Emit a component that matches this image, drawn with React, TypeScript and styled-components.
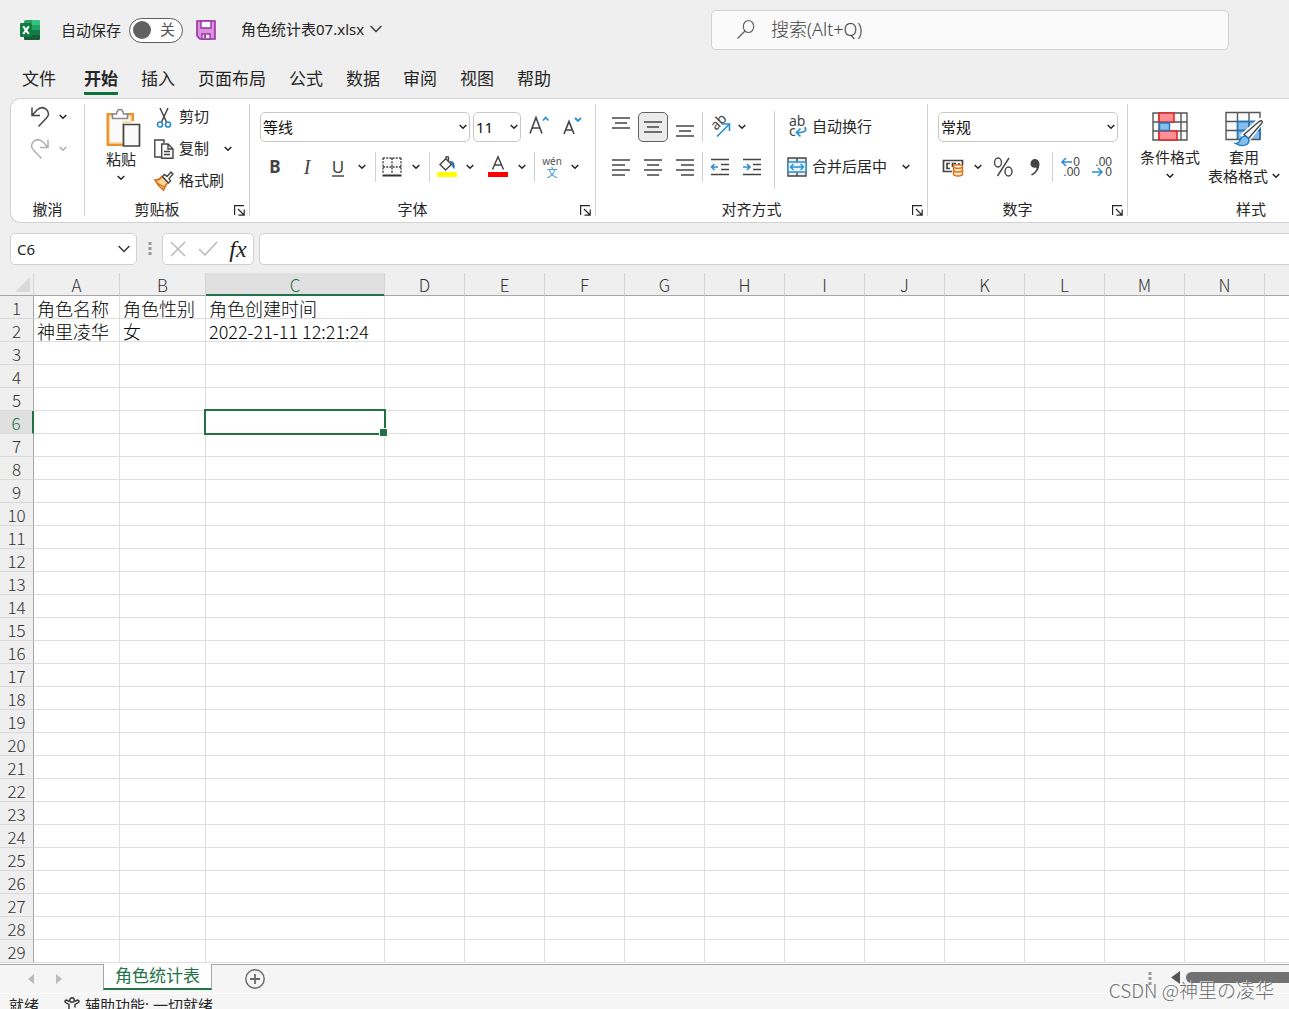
import React, { useState } from "react";
import styled, { createGlobalStyle, css } from "styled-components";

const ui = '"Noto Sans", "Noto Sans CJK SC", sans-serif';
const sheet = '"Noto Sans CJK SC", sans-serif';
const green = "#217346";
const blue = "#2b8fd0";
const ink = "#444444";

const Global = createGlobalStyle`
  * { box-sizing: border-box; }
  body { margin: 0; background: #efefef; color: #262626; font: 15px/22px ${ui}; }
  button, input, select { font: inherit; color: inherit; }
  button { border: 0; padding: 0; margin: 0; background: none; }
  svg { display: block; flex: none; overflow: visible; }
`;

const Shell = styled.div`
  position: relative;
  display: flex;
  flex-direction: column;
  height: 100vh;
  overflow: hidden;
`;

/* ---------- title bar ---------- */
const TitleBar = styled.header`
  display: flex;
  align-items: center;
  height: 60px;
  padding: 0 60px 0 20px;
`;
const AutoSave = styled.label`
  display: flex;
  align-items: center;
  gap: 8px;
  margin: 0 13px 0 21px;
`;
const Toggle = styled.span`
  position: relative;
  display: flex;
  align-items: center;
  justify-content: space-between;
  width: 54px;
  height: 25px;
  padding: 0 7px 2px 3px;
  border: 1px solid #5c5c5c;
  border-radius: 13px;
  background: #fff;
  color: #555;
  line-height: 20px;
  input { position: absolute; inset: 0; margin: 0; opacity: 0; width: 100%; height: 100%; }
`;
const Knob = styled.span`
  width: 18px;
  height: 18px;
  margin-top: 2px;
  border-radius: 50%;
  background: #616161;
`;
const FileName = styled.button`
  display: flex;
  align-items: center;
  gap: 6px;
  margin-left: 25px;
  padding-bottom: 2px;
`;
const Search = styled.label`
  display: flex;
  align-items: center;
  gap: 16px;
  width: 518px;
  height: 40px;
  margin-left: auto;
  padding: 0 0 2px 25px;
  border: 1px solid #d1d1d1;
  border-radius: 5px;
  background: #fafafa;
  input {
    flex: 1;
    min-width: 0;
    padding: 0;
    border: 0;
    outline: 0;
    background: none;
    font-size: 18px;
    font-weight: 300;
    &::placeholder { color: #444; opacity: 1; }
  }
`;

/* ---------- tabs ---------- */
const Tabs = styled.nav`
  display: flex;
  gap: 23px;
  height: 38px;
  padding: 6px 22px 0;
`;
const Tab = styled.button<{ $on?: boolean }>`
  display: block;
  height: 29px;
  font-size: 17px;
  line-height: 26px;
  border-bottom: 3px solid ${(p) => (p.$on ? "#0f703b" : "transparent")};
  border-radius: 1px;
  font-weight: ${(p) => (p.$on ? 700 : 400)};
  &:first-child { margin-right: 5px; }
`;

/* ---------- ribbon ---------- */
const Ribbon = styled.section`
  display: flex;
  flex: none;
  height: 125px;
  margin-left: 10px;
  padding: 5px 0 6px;
  border: 1px solid #d1d1d1;
  border-right: 0;
  border-radius: 10px 0 0 10px;
  background: #fff;
  overflow: hidden;
`;
const Group = styled.div<{ $w: number }>`
  display: flex;
  flex: none;
  flex-direction: column;
  justify-content: space-between;
  width: ${(p) => p.$w}px;
  border-right: 1px solid #d1d1d1;
  &:last-child { border-right: 0; }
`;
const GroupBody = styled.div<{ $left: number }>`
  display: flex;
  padding-left: ${(p) => p.$left}px;
`;
const GroupFoot = styled.div`
  display: flex;
  align-items: center;
  height: 14px;
  line-height: 14px;
  span { flex: 1; text-align: center; }
`;
const Launcher = styled.button`
  width: 20px;
  padding: 3px 0 0 5px;
`;
const Stack = styled.div<{ $left?: number; $top?: number; $gap?: number }>`
  display: flex;
  flex-direction: column;
  gap: ${(p) => p.$gap ?? 6}px;
  padding-left: ${(p) => p.$left ?? 0}px;
  padding-top: ${(p) => p.$top ?? 0}px;
`;
const Row = styled.div<{ $h?: number; $gap?: number }>`
  display: flex;
  align-items: center;
  height: ${(p) => p.$h ?? 30}px;
  gap: ${(p) => p.$gap ?? 0}px;
`;
const Tool = styled.button<{ $w?: number; $on?: boolean }>`
  display: flex;
  flex: none;
  align-items: center;
  justify-content: center;
  width: ${(p) => p.$w ?? 30}px;
  height: 30px;
  color: ${ink};
  border-radius: 5px;
  ${(p) => p.$on && css`border: 1px solid #616161; background: #ebebeb;`}
`;
const Drop = styled(Tool)<{ $off?: boolean; $left?: number }>`
  margin-left: ${(p) => p.$left ?? 0}px;
  color: ${(p) => (p.$off ? "#b0b0b0" : "#262626")};
`;
const TextTool = styled.button`
  display: flex;
  align-items: center;
  gap: 5px;
  height: 26px;
  white-space: nowrap;
  span { padding-bottom: 2px; }
`;
const Sep = styled.span`
  flex: none;
  width: 1px;
  height: 30px;
  margin: 0 2px 0 3px;
  background: #d1d1d1;
`;
const NarrowSep = styled(Sep)`
  margin: 0;
`;
const TallSep = styled.span`
  width: 1px;
  height: 78px;
  margin: 7px 0 0 7px;
  background: #d1d1d1;
`;
const BigTool = styled.button<{ $w: number; $top: number }>`
  display: flex;
  flex: none;
  flex-direction: column;
  align-items: center;
  width: ${(p) => p.$w}px;
  padding-top: ${(p) => p.$top}px;
  white-space: nowrap;
`;
const BigLine = styled.span<{ $h: number }>`
  display: flex;
  align-items: center;
  justify-content: center;
  gap: 4px;
  height: ${(p) => p.$h}px;
`;
const SelectBox = styled.span<{ $w: number }>`
  position: relative;
  width: ${(p) => p.$w}px;
  height: 30px;
  select {
    width: 100%;
    height: 100%;
    padding: 0 16px 0 2px;
    appearance: none;
    border: 1px solid #c8c8c8;
    border-radius: 5px;
    background: #fff;
    color: #111;
  }
  svg { position: absolute; right: 3px; top: 12px; pointer-events: none; }
`;
const Letter = styled.span<{ $kind: "b" | "i" | "u" }>`
  font-size: 17px;
  line-height: 20px;
  ${(p) => p.$kind === "b" && css`font-weight: 700;`}
  ${(p) => p.$kind === "i" && css`font-family: "Liberation Serif", serif; font-style: italic; font-size: 20px;`}
  ${(p) => p.$kind === "u" && css`line-height: 17px; border-bottom: 2px solid #777;`}
`;
const Pinyin = styled.span`
  display: flex;
  flex-direction: column;
  align-items: center;
  font-size: 10px;
  line-height: 11px;
  color: #555;
  b { font-weight: 400; font-size: 11px; color: ${blue}; }
`;

/* ---------- formula bar ---------- */
const FormulaBar = styled.section`
  display: flex;
  flex: none;
  height: 50px;
  padding: 10px 0 8px 10px;
`;
const box = css`
  display: flex;
  align-items: center;
  height: 32px;
  border: 1px solid #d1d1d1;
  border-radius: 5px;
  background: #fff;
`;
const NameBox = styled.div`
  ${box}
  width: 127px;
  padding: 0 6px;
  input { flex: 1; min-width: 0; padding: 0; border: 0; outline: 0; background: none; }
`;
const Grip = styled.span<{ $w: number }>`
  display: flex;
  align-items: center;
  justify-content: center;
  width: ${(p) => p.$w}px;
`;
const FxBox = styled.div`
  ${box}
  width: 92px;
  margin-right: 5px;
`;
const Fx = styled.span`
  font: italic 400 24px/24px "Liberation Serif", serif;
  color: #222;
`;
const FormulaInput = styled.input`
  ${box}
  flex: 1;
  border-right: 0;
  border-radius: 5px 0 0 5px;
  outline: 0;
  padding: 0 6px;
`;

/* ---------- grid ---------- */
const GridArea = styled.main`
  flex: 1;
  min-height: 0;
  overflow: hidden;
  background: #fff;
`;
const Table = styled.table`
  width: 100%;
  table-layout: fixed;
  border-collapse: separate;
  border-spacing: 0;
  font-family: ${sheet};
  font-weight: 300;
  line-height: 20px;
`;
const ColHead = styled.th<{ $on?: boolean }>`
  height: 23px;
  padding: 2px 0 0;
  font-size: 17px;
  font-weight: 300;
  color: ${(p) => (p.$on ? green : "#333")};
  background: ${(p) => (p.$on ? "#e0e0e0" : "#efefef")};
  border-right: 1px solid #d4d4d4;
  border-bottom: 1px solid ${(p) => (p.$on ? green : "#a6a6a6")};
  box-shadow: ${(p) => (p.$on ? `inset 0 -1px ${green}` : "none")};
  &:last-child { border-right: 0; }
`;
const Corner = styled.td`
  padding: 0 0 0 15px;
  background: #efefef;
  border-right: 1px solid #d4d4d4;
  border-bottom: 1px solid #a6a6a6;
`;
const RowHead = styled.th<{ $on?: boolean }>`
  height: 23px;
  padding: 2px 0 0;
  font-size: 17px;
  font-weight: 300;
  color: ${(p) => (p.$on ? green : "#333")};
  background: ${(p) => (p.$on ? "#e0e0e0" : "#efefef")};
  border-right: ${(p) => (p.$on ? `2px solid ${green}` : "1px solid #a6a6a6")};
  border-bottom: 1px solid #d9d9d9;
`;
const Cell = styled.td`
  position: relative;
  height: 23px;
  padding: 2px 0 0 3px;
  font-size: 18px;
  color: #000;
  white-space: nowrap;
  border-right: 1px solid #dedede;
  border-bottom: 1px solid #dedede;
  &:last-child { border-right: 0; }
`;
const Selection = styled.span`
  position: absolute;
  z-index: 1;
  inset: -2px;
  border: 2px solid ${green};
  &::after {
    content: "";
    position: absolute;
    right: -4px;
    bottom: -4px;
    width: 7px;
    height: 7px;
    border: 1px solid #fff;
    background: ${green};
  }
`;

/* ---------- bottom ---------- */
const SheetBar = styled.footer`
  display: flex;
  flex: none;
  height: 30px;
  border-top: 1px solid #a6a6a6;
  border-bottom: 1px solid #fff;
  background: #f5f5f5;
`;
const SheetNav = styled.div`
  display: flex;
  align-items: center;
  gap: 22px;
  width: 103px;
  padding-left: 28px;
`;
const SheetTab = styled.button`
  height: 26px;
  width: 109px;
  margin-top: -1px;
  padding-bottom: 3px;
  border: 1px solid #a6a6a6;
  border-top: 0;
  border-bottom: 2px solid ${green};
  background: #fff;
  color: ${green};
  font: 17px/20px ${sheet};
`;
const AddSheet = styled.button`
  margin-left: 33px;
`;
const ScrollZone = styled.div`
  display: flex;
  align-items: center;
  width: 153px;
  margin-left: auto;
  padding-left: 11px;
`;
const ScrollArrow = styled.button`
  margin: 0 6px 4px 18px;
`;
const Thumb = styled.span`
  flex: 1;
  height: 11px;
  margin-bottom: 4px;
  border-radius: 6px 0 0 6px;
  background: #717171;
`;
const Status = styled.div`
  display: flex;
  flex: none;
  gap: 25px;
  height: 15px;
  padding-left: 9px;
  overflow: hidden;
  background: #f5f5f5;
  line-height: 22px;
  span { display: flex; gap: 5px; }
  svg { margin-top: 3px; }
`;
const Watermark = styled.span`
  position: absolute;
  right: 15px;
  bottom: 7px;
  font: 300 19px/24px ${sheet};
  color: #707070;
  text-shadow: -1px -1px 0 rgba(255, 255, 255, 0.7);
`;

/* ---------- drawings ---------- */
const S = ({ w, h, children, c = ink }: { w: number; h: number; children: React.ReactNode; c?: string }) => (
  <svg width={w} height={h} viewBox={`0 0 ${w} ${h}`} fill="none" stroke={c} strokeWidth="1.4" aria-hidden="true">
    {children}
  </svg>
);
const Glyph = styled.text<{ $size: number }>`
  font-family: ${ui};
  font-size: ${(p) => p.$size}px;
  font-weight: 400;
  fill: ${ink};
  stroke: none;
`;
const Chev = () => <S w={8} h={6} c="currentColor"><path d="M.7 1 4 4.3 7.3 1" strokeWidth="1.5" /></S>;
const BigChev = () => <S w={12} h={8} c="#333"><path d="M.6 1 6 6.5 11.4 1" /></S>;

const ExcelIcon = () => (
  <svg width="20" height="20" viewBox="0 0 20 20" aria-hidden="true">
    <path d="M6 0h7v5H4V2q0-2 2-2z" fill="#21a366" /><path d="M12 0h7q1 0 1 1v4h-8z" fill="#33c481" />
    <path d="M4 5h8v5H4z" fill="#107c41" /><path d="M12 5h8v5h-8z" fill="#21a366" />
    <path d="M4 10h8v5H4z" fill="#185c37" /><path d="M12 10h8v5h-8z" fill="#107c41" />
    <path d="M4 15h16v4q0 1-1 1H5q-1 0-1-1z" fill="#185c37" />
    <rect y="3" width="12" height="14" rx="1.2" fill="#107c41" />
    <path d="m3.2 6.3 5.6 7.6M8.8 6.3l-5.6 7.6" stroke="#fff" strokeWidth="2" />
  </svg>
);
const SaveIcon = () => (
  <S w={20} h={20} c="#9b2fa5">
    <path d="M1 1h18v18H4l-3-3z" fill="#d993dc" strokeWidth="1.6" />
    <path d="M5 1h10v7H5zM6 19v-5h8v5z" fill="#fafafa" /><path d="M9 15v3" strokeWidth="2" />
  </S>
);
const SearchIcon = () => <S w={18} h={20} c="#666"><ellipse cx="11.5" cy="7.5" rx="5.2" ry="6" strokeWidth="1.2" /><path d="m8 12-7.5 7.5" /></S>;
const Undo = () => <S w={20} h={22}><path d="M2 1.5v8h8M2 9.5 7 4q5-4.500 9.500-.5 4 4.500 0 8.500L8.500 20.500" strokeWidth="1.5" /></S>;
const Redo = () => <S w={20} h={22} c="#b0b0b0"><path d="M18 1.500v8h-8M18 9.500 13 4Q8 -.5 3.500 3.500q-4 4.500 0 8.500l8 8.500" strokeWidth="1.500" /></S>;
const PasteIcon = () => (
  <S w={38} h={40}>
    <g transform="translate(4 0)">
      <path d="M8 6.500H2v30h15M20 6.500h6.500V13" stroke="#e8912d" strokeWidth="3" />
      <path d="M3.500 8h21.500v6h-8v21H3.500z" fill="#fafafa" stroke="#f9d79b" />
      <path d="M6.500 10.500V6h4q.5-4.500 3.500-4.500T17.500 6h4v4.500z" fill="#fafafa" stroke="#8a8a8a" strokeWidth="1.600" />
      <path d="M17.500 16.500h16V38h-16z" fill="#fafafa" strokeWidth="1.700" />
    </g>
  </S>
);
const CutIcon = () => (
  <S w={20} h={22}>
    <path d="m6 2 6.500 14M14 2 7.500 16" strokeWidth="1.500" />
    <circle cx="6" cy="18.500" r="2.500" stroke={blue} strokeWidth="1.700" /><circle cx="14" cy="18.500" r="2.500" stroke={blue} strokeWidth="1.700" />
  </S>
);
const CopyIcon = () => (
  <S w={20} h={20}>
    <path d="M7 18H.8V1H10v3" /><path d="M7.700 5H14l5 5v9.300H7.700zM14 5v5h5M10 12.500h6M10 15.500h6" fill="#fafafa" />
  </S>
);
const BrushIcon = () => (
  <S w={20} h={20}>
    <path d="M1 9q4 .5 7-3.500l6 6Q10.500 15 9.500 19L5 15z" fill="#f9d79b" stroke="#dd6e10" strokeWidth="1.600" />
    <path d="m3 12 7 4" stroke="#dd6e10" />
    <path d="m8.500 5.500 2-2 2.500 2 4-4.500 2 2-4 4.500 1.500 2.500-2 2z" fill="#fff" />
  </S>
);
const LaunchIcon = () => <S w={11} h={11}><path d="M.6 10V.6H10M4 4l5.500 5.500M10.200 4.500v5.700H4.500" stroke="#262626" strokeWidth="1.200" /></S>;
const GrowA = ({ down }: { down?: boolean }) => (
  <S w={22} h={22}>
    {down
      ? <path d="m3 18 5-12.500 5 12.500M4.700 14h6.600" strokeWidth="1.600" />
      : <path d="M2 17.500 8 1.500l6 16M4.200 12h7.600" strokeWidth="1.600" />}
    <path d={down ? "m14 2 3 3 3-3" : "m15 4.500 2.700-3 2.700 3"} stroke={blue} strokeWidth="1.800" />
  </S>
);
const BorderIcon = () => (
  <S w={20} h={20}><path d="M1 1h18v17H1z" fill="#fafafa" stroke="none" /><path d="M1 1h18M1 10h18M1 1v16M10 1v16M19 1v16" strokeDasharray="2 1.200" /><path d="M.5 18.500h19" stroke="#333" strokeWidth="2" /></S>
);
const FillIcon = () => (
  <S w={20} h={22}>
    <path d="m8.500 2.500 6 6L8.500 14 3 8.500 9 2.500V1q2.500-1 2.500 1v3.500" fill="#fafafa" />
    <path d="M12.500 5q6-1 5 8-2.500-1-2.500-5z" fill="#1a72b8" stroke="none" />
    <path d="M0 16h20v5H0z" fill="#ffff00" stroke="none" />
  </S>
);
const FontColor = () => <S w={20} h={22}><path d="M4.500 13.500 10 .8l5.500 12.700M6.500 9h7" strokeWidth="1.500" /><path d="M0 16h20v5H0z" fill="#f00" stroke="none" /></S>;

const Lines = ({ l }: { l: [number, number][] }) => (
  <S w={20} h={5 * (l.length - 1) + 2}>
    {l.map(([a, b], i) => <path key={i} d={`M${a} ${i * 5 + 1}H${b}`} strokeWidth="1.500" />)}
  </S>
);
const VAlign = styled.span<{ $at: string }>`
  display: flex;
  flex-direction: column;
  justify-content: ${(p) => p.$at};
  height: 20px;
`;
const Orient = () => (
  <S w={22} h={22}>
    <Glyph $size={14} transform="translate(7 15) rotate(-45)">ab</Glyph>
    <path d="M8 20.500 20 8.500M13.500 8H20.500V15" stroke={blue} strokeWidth="1.600" />
  </S>
);
const Indent = ({ right }: { right?: boolean }) => (
  <S w={20} h={18}>
    <path d="M1 1.500h18M11 6.500h8M11 11.500h8M1 16.500h18" strokeWidth="1.500" />
    <path d={right ? "M1 9h7M5 6l3 3-3 3" : "M8 9H1.500M4.500 6l-3 3 3 3"} stroke={blue} strokeWidth="1.600" />
  </S>
);
const WrapIcon = () => (
  <S w={20} h={22}>
    <Glyph $size={14} x="2" y="10">ab</Glyph>
    <Glyph $size={14} x="2" y="20">c</Glyph>
    <path d="M18 11q3 6-8 5.500M13.500 12.500l-4 4 4 4" stroke={blue} strokeWidth="1.700" />
  </S>
);
const MergeIcon = () => (
  <S w={20} h={20}>
    <path d="M1 1h18v18H1zM10 1v18" fill="#eee" /><path d="M1 5h18v10H1z" fill="#eaf4fc" stroke={blue} />
    <path d="M3.500 10h13M6.500 7l-3 3 3 3M13.500 7l3 3-3 3" stroke={blue} />
  </S>
);
const MoneyIcon = () => (
  <S w={22} h={20}>
    <path d="M10 14.500H1.500v-11h19V8M8 6.500H5v5h3M14 6.500h-3.500V10M17 6v2" strokeWidth="1.700" />
    <path d="M11.500 9.500v7.500q0 2 4.500 2t4.500-2V9.500z" fill="#fde3c4" stroke="#dd6e10" /><ellipse cx="16" cy="9.500" rx="4.500" ry="1.800" fill="#fff" stroke="#dd6e10" />
    <path d="M11.500 13q0 2 4.500 2t4.500-2" stroke="#dd6e10" />
  </S>
);
const PercentIcon = () => <S w={20} h={20}><ellipse cx="5" cy="5.500" rx="3.500" ry="4.500" /><ellipse cx="15.500" cy="14.500" rx="3.500" ry="4.500" /><path d="M16 1 4.500 19" /></S>;
const CommaIcon = () => <S w={12} h={18}><path d="M2 16.500Q8 13 7.500 9.500 1.500 10.500 1.500 5.500 2 1 6 1q4.500.500 4.500 5.500Q10 14 3 17.500z" fill={ink} stroke="none" /></S>;
const Decimals = styled.span`
  position: relative;
  display: flex;
  flex-direction: column;
  align-items: flex-end;
  width: 20px;
  font: 12px/10px "Liberation Sans", sans-serif;
  svg { position: absolute; left: 0; }
`;
const ArrowSmall = ({ right }: { right?: boolean }) => (
  <S w={12} h={10} c={blue}><path d={right ? "M0 5h10M6 1l4 4-4 4" : "M12 5H2M6 1 2 5l4 4"} strokeWidth="1.600" /></S>
);
const CondIcon = () => (
  <S w={36} h={29}>
    <path d="M1 1h34v27H1zM1 10h34M1 19h34M7 1v27M29 1v27" fill="#fafafa" stroke="#555" />
    <path d="M7 1h15v9H7zM7 19h18v9H7z" fill="#ff8f94" stroke="#d92a2a" strokeWidth="1.600" /><path d="M7.500 11h10v7.500h-10z" fill="#83beec" stroke="#1f78c1" />
  </S>
);
const TableFmtIcon = () => (
  <S w={38} h={36}>
    <path d="M1 1.500h34v27H1z" fill="#fafafa" stroke="none" /><path d="M12.500 10.500H35v18H12.500z" fill="#83beec" stroke="none" />
    <path d="M1 1.500h34v27H1zM1 10.500h34M1 19.500h34M12.500 1.500v27M24 1.500v27" stroke="#555" /><path d="M12.500 28V10.500H35V28M24 10.500V28M12.500 19.500H35" stroke="#1f78c1" />
    <path d="M18 24 34 9.500q4-2 3 1.500L23 29z" fill="#fff" stroke="#fff" strokeWidth="4" />
    <path d="m19 23.500 15-13q4-2 3 1.500L23.500 27.500z" fill="#fafafa" /><path d="M10.500 32.500q4 0 5-4.500 3-4.500 7-1.500 3 3 0 6.500-5 3.500-12-.5z" fill="#83beec" stroke="#1f78c1" />
  </S>
);
const DotsIcon = () => <S w={4} h={14}><path d="M.5 0h3v3h-3zM.5 5h3v3h-3zM.5 10h3v3h-3z" fill="#999" stroke="none" /></S>;
const Tri = ({ right, c = "#bcbcbc", w = 6 }: { right?: boolean; c?: string; w?: number }) => (
  <svg width={w} height={w + 4} viewBox="0 0 6 10" preserveAspectRatio="none" aria-hidden="true"><path d={right ? "M0 0v10l6-5z" : "M6 0v10L0 5z"} fill={c} /></svg>
);
const AccessIcon = () => (
  <S w={16} h={18} c="#333"><circle cx="8" cy="3" r="2.200" /><path d="M5.500 4.500 2.500 3Q0 4 1.500 5.500L5 7.500v4L3.500 16M10.500 4.500l3-1.500Q16 4 14.500 5.500L11 7.500v3M10 14l4 3M14 13l-4 4" /></S>
);

const tabs = ["文件", "开始", "插入", "页面布局", "公式", "数据", "审阅", "视图", "帮助"];
const cols: [string, number][] = [
  ["A", 86], ["B", 86], ["C", 179],
  ...["D", "E", "F", "G", "H", "I", "J", "K", "L", "M", "N"].map((c): [string, number] => [c, 80]),
];
const data: Record<string, string> = {
  A1: "角色名称", B1: "角色性别", C1: "角色创建时间",
  A2: "神里凌华", B2: "女", C2: "2022-21-11 12:21:24",
};

const Pick = ({ w, label, value }: { w: number; label: string; value: string }) => (
  <SelectBox $w={w}>
    <select aria-label={label} defaultValue={value}><option>{value}</option></select>
    <Chev />
  </SelectBox>
);
const DropBtn = ({ w = 20, label, left, off }: { w?: number; label: string; left?: number; off?: boolean }) => (
  <Drop $w={w} $left={left} $off={off} aria-label={label}><Chev /></Drop>
);
const Foot = ({ label, launch = true }: { label: string; launch?: boolean }) => (
  <GroupFoot><span>{label}</span>{launch && <Launcher aria-label={`${label}设置`}><LaunchIcon /></Launcher>}</GroupFoot>
);

export default function App() {
  const [tab, setTab] = useState("开始");
  return (
    <Shell>
      <Global />
      <TitleBar>
        <ExcelIcon />
        <AutoSave>
          自动保存
          <Toggle><input type="checkbox" aria-label="自动保存" /><Knob />关</Toggle>
        </AutoSave>
        <button aria-label="保存"><SaveIcon /></button>
        <FileName>角色统计表07.xlsx<BigChev /></FileName>
        <Search><SearchIcon /><input aria-label="搜索" placeholder="搜索(Alt+Q)" /></Search>
      </TitleBar>

      <Tabs>
        {tabs.map((t) => <Tab key={t} $on={t === tab} onClick={() => setTab(t)}>{t}</Tab>)}
      </Tabs>

      <Ribbon>
        <Group $w={74}>
          <GroupBody $left={15}>
            <Stack>
              <Row $h={26}><Tool $w={28} aria-label="撤消"><Undo /></Tool><DropBtn w={18} label="撤消选项" /></Row>
              <Row $h={26}><Tool $w={28} aria-label="恢复"><Redo /></Tool><DropBtn w={18} label="恢复选项" off /></Row>
            </Stack>
          </GroupBody>
          <Foot label="撤消" launch={false} />
        </Group>

        <Group $w={165}>
          <GroupBody $left={17}>
            <BigTool $w={38} $top={4}>
              <PasteIcon /><BigLine $h={22}>粘贴</BigLine><BigLine $h={16}><Chev /></BigLine>
            </BigTool>
            <Stack $left={14}>
              <TextTool><CutIcon /><span>剪切</span></TextTool>
              <Row $h={26}><TextTool><CopyIcon /><span>复制</span></TextTool><DropBtn w={18} left={10} label="复制选项" /></Row>
              <TextTool><BrushIcon /><span>格式刷</span></TextTool>
            </Stack>
          </GroupBody>
          <Foot label="剪贴板" />
        </Group>

        <Group $w={346}>
          <GroupBody $left={10}>
            <Stack $top={8} $gap={10}>
              <Row $gap={3}>
                <Pick w={210} label="字体" value="等线" />
                <Pick w={48} label="字号" value="11" />
                <Tool aria-label="增大字号"><GrowA /></Tool>
                <Tool aria-label="减小字号"><GrowA down /></Tool>
              </Row>
              <Row>
                <Tool><Letter $kind="b">B</Letter></Tool>
                <Tool $w={34}><Letter $kind="i">I</Letter></Tool>
                <Tool $w={28}><Letter $kind="u">U</Letter></Tool><DropBtn label="下划线选项" />
                <Sep />
                <Tool $w={28} aria-label="边框"><BorderIcon /></Tool><DropBtn label="边框选项" />
                <Sep />
                <Tool $w={30} aria-label="填充颜色"><FillIcon /></Tool><DropBtn w={16} label="填充颜色选项" />
                <Tool $w={40} aria-label="字体颜色"><FontColor /></Tool><DropBtn w={8} label="字体颜色选项" />
                <Sep style={{ marginLeft: 8 }} />
                <Tool $w={30}><Pinyin>wén<b>文</b></Pinyin></Tool><DropBtn w={16} label="拼音选项" />
              </Row>
            </Stack>
          </GroupBody>
          <Foot label="字体" />
        </Group>

        <Group $w={332}>
          <GroupBody $left={10}>
            <Stack $top={8} $gap={10}>
              <Row $gap={2}>
                <Tool aria-label="顶端对齐"><VAlign $at="flex-start"><Lines l={[[1, 19], [4, 16], [1, 19]]} /></VAlign></Tool>
                <Tool $on aria-label="垂直居中"><VAlign $at="center"><Lines l={[[1, 19], [4, 16], [1, 19]]} /></VAlign></Tool>
                <Tool aria-label="底端对齐"><VAlign $at="flex-end"><Lines l={[[1, 19], [4, 16], [1, 19]]} /></VAlign></Tool>
                <NarrowSep />
                <Tool aria-label="方向"><Orient /></Tool><DropBtn w={10} label="方向选项" />
              </Row>
              <Row $gap={2}>
                <Tool aria-label="左对齐"><Lines l={[[1, 19], [1, 14], [1, 19], [1, 14]]} /></Tool>
                <Tool aria-label="居中"><Lines l={[[1, 19], [4, 16], [1, 19], [4, 16]]} /></Tool>
                <Tool aria-label="右对齐"><Lines l={[[1, 19], [6, 19], [1, 19], [6, 19]]} /></Tool>
                <NarrowSep />
                <Tool aria-label="减少缩进量"><Indent /></Tool>
                <Tool aria-label="增加缩进量"><Indent right /></Tool>
              </Row>
            </Stack>
            <TallSep />
            <Stack $left={12} $top={8} $gap={10}>
              <Row><TextTool><WrapIcon /><span>自动换行</span></TextTool></Row>
              <Row><TextTool><MergeIcon /><span>合并后居中</span></TextTool><DropBtn left={9} label="合并选项" /></Row>
            </Stack>
          </GroupBody>
          <Foot label="对齐方式" />
        </Group>

        <Group $w={200}>
          <GroupBody $left={10}>
            <Stack $top={8} $gap={10}>
              <Row><Pick w={180} label="数字格式" value="常规" /></Row>
              <Row $gap={2}>
                <Tool aria-label="会计数字格式"><MoneyIcon /></Tool><DropBtn w={16} label="会计数字格式选项" />
                <Tool aria-label="百分比样式"><PercentIcon /></Tool>
                <Tool aria-label="千位分隔样式"><CommaIcon /></Tool>
                <NarrowSep />
                <Tool aria-label="增加小数位数"><Decimals><ArrowSmall />0<span>.00</span></Decimals></Tool>
                <Tool aria-label="减少小数位数"><Decimals>.00<span><ArrowSmall right />0</span></Decimals></Tool>
              </Row>
            </Stack>
          </GroupBody>
          <Foot label="数字" />
        </Group>

        <Group $w={246}>
          <GroupBody $left={11}>
            <BigTool $w={62} $top={8}>
              <CondIcon /><BigLine $h={6} /><BigLine $h={20}>条件格式</BigLine><BigLine $h={18}><Chev /></BigLine>
            </BigTool>
            <Stack $left={6}>
              <BigTool $w={74} $top={7}>
                <TableFmtIcon /><BigLine $h={20}>套用</BigLine><BigLine $h={18}>表格格式<Chev /></BigLine>
              </BigTool>
            </Stack>
          </GroupBody>
          <Foot label="样式" launch={false} />
        </Group>
      </Ribbon>

      <FormulaBar>
        <NameBox><input aria-label="名称框" defaultValue="C6" /><BigChev /></NameBox>
        <Grip $w={25}><DotsIcon /></Grip>
        <FxBox>
          <Tool aria-label="取消"><S w={16} h={16} c="#b5b5b5"><path d="m1 1 14 14M15 1 1 15" /></S></Tool>
          <Tool aria-label="输入"><S w={20} h={16} c="#b5b5b5"><path d="m1 8 6 6L19 1" /></S></Tool>
          <Tool><Fx>fx</Fx></Tool>
        </FxBox>
        <FormulaInput aria-label="编辑栏" />
      </FormulaBar>

      <GridArea>
        <Table>
          <colgroup>
            <col style={{ width: 34 }} />
            {cols.map(([c, w]) => <col key={c} style={{ width: w }} />)}
            <col />
          </colgroup>
          <thead>
            <tr>
              <Corner><S w={16} h={15}><path d="M15 0v15H0z" fill="#dadada" stroke="none" /></S></Corner>
              {cols.map(([c]) => <ColHead key={c} scope="col" $on={c === "C"}>{c}</ColHead>)}
              <ColHead />
            </tr>
          </thead>
          <tbody>
            {Array.from({ length: 29 }, (_, i) => i + 1).map((r) => (
              <tr key={r}>
                <RowHead scope="row" $on={r === 6}>{r}</RowHead>
                {cols.map(([c]) => (
                  <Cell key={c}>
                    {data[c + r]}
                    {c + r === "C6" && <Selection />}
                  </Cell>
                ))}
                <Cell />
              </tr>
            ))}
          </tbody>
        </Table>
      </GridArea>

      <SheetBar>
        <SheetNav>
          <button aria-label="上一张工作表"><Tri /></button>
          <button aria-label="下一张工作表"><Tri right /></button>
        </SheetNav>
        <SheetTab>角色统计表</SheetTab>
        <AddSheet aria-label="新工作表">
          <S w={20} h={20} c="#6a6a6a"><circle cx="10" cy="10" r="9.200" /><path d="M10 5v10M5 10h10" strokeWidth="1.800" /></S>
        </AddSheet>
        <ScrollZone>
          <Grip $w={6}><DotsIcon /></Grip>
          <ScrollArrow aria-label="向左滚动"><Tri c="#555" w={9} /></ScrollArrow>
          <Thumb />
        </ScrollZone>
      </SheetBar>
      <Status><span>就绪</span><span><AccessIcon />辅助功能: 一切就绪</span></Status>
      <Watermark>CSDN @神里の凌华</Watermark>
    </Shell>
  );
}
